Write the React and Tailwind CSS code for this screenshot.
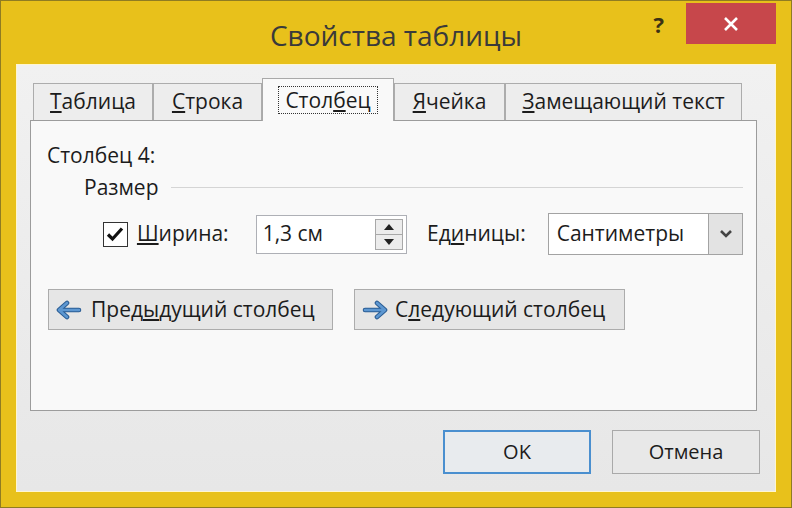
import React from 'react';

const font = { fontFamily: '"Open Sans", "Noto Sans", sans-serif' };

function Tab({ children, active, width }) {
  if (active) {
    return (
      <div className="relative z-10 -mb-px flex h-[43px] w-[132px] items-center justify-center border border-b-0 border-[#a9a9a9] bg-[#f9f9f9]">
        <span className="border border-dotted border-[#333] px-[6px] leading-[26px]">{children}</span>
      </div>
    );
  }
  return (
    <div className={'flex h-[37px] items-center justify-center border border-b-0 border-[#acacac] bg-[#ededed] ' + width}>
      {children}
    </div>
  );
}

function ArrowIcon({ dir }) {
  return (
    <svg width="28" height="20" viewBox="0 0 28 20">
      <g transform={dir === 'left' ? '' : 'translate(28 0) scale(-1 1)'}>
        <path d="M24 10H5M12 3L4 10l8 7" fill="none" stroke="#2a5c93" strokeWidth="4.6" strokeLinecap="round" strokeLinejoin="round" />
        <path d="M24 10H5M12 3L4 10l8 7" fill="none" stroke="#5d97d1" strokeWidth="2.6" strokeLinecap="round" strokeLinejoin="round" />
      </g>
    </svg>
  );
}

export default function App() {
  return (
    <div style={font} className="flex h-[508px] w-[792px] flex-col border border-[#8f7c22] bg-[#e8c11b] text-[#1c1c1c]">
      {/* title bar */}
      <div className="grid h-[63px] grid-cols-[1fr_auto_1fr]">
        <div />
        <div className="pt-[14px] text-[28px] leading-[40px] text-[#3a3a3a]">Свойства таблицы</div>
        <div className="flex items-start justify-end pr-[15px]">
          <div className="mt-[8px] mr-[22px] text-[22px] font-bold leading-[30px] text-[#3b3114]">?</div>
          <div className="mt-[2px] flex h-[41px] w-[90px] items-center justify-center bg-[#c7474b]">
            <svg width="16" height="16" viewBox="0 0 16 16">
              <path d="M2 2l12 12M14 2L2 14" stroke="#fff" strokeWidth="2.6" />
            </svg>
          </div>
        </div>
      </div>

      {/* client area */}
      <div className="mx-[15px] mb-[15px] flex flex-1 flex-col border border-[#fff6cf] bg-gradient-to-b from-[#f1f1f1] to-[#e7e7e7] px-[13px] pt-[13px]">
        <div className="flex items-end pl-[3px] text-[21px]">
          <Tab width="w-[120px]"><u>Т</u>аблица</Tab>
          <Tab width="w-[109px]"><u>С</u>трока</Tab>
          <Tab active>Стол<u>б</u>ец</Tab>
          <Tab width="w-[111px]"><u>Я</u>чейка</Tab>
          <Tab width="w-[237px]"><u>З</u>амещающий текст</Tab>
        </div>

        <div className="flex h-[291px] w-[727px] flex-col border border-[#9c9c9c] bg-[#f9f9f9] pl-[16px] pr-[13px] pt-[20px] text-[21px]">
          <div className="leading-[28px]">Столбец 4:</div>
          <div className="mt-[4px] flex items-center pl-[37px]">
            <span className="leading-[28px]">Размер</span>
            <div className="ml-[12px] h-px flex-1 bg-[#d5d5d5]" />
          </div>

          <div className="mt-[12px] flex items-center pl-[56px]">
            <div className="flex h-[25px] w-[25px] items-center justify-center border-[1.5px] border-[#333] bg-white">
              <svg width="18" height="16" viewBox="0 0 18 16">
                <path d="M2 8.5l4.5 4.5L16 2.5" fill="none" stroke="#111" strokeWidth="3.2" />
              </svg>
            </div>
            <span className="ml-[9px]"><u>Ш</u>ирина:</span>
            <div className="ml-[27px] flex h-[39px] w-[152px] border border-[#aeb0b6] bg-white">
              <div className="flex flex-1 items-center pl-[6px]">1,3 см</div>
              <div className="my-[3px] mr-[3px] flex w-[28px] flex-col border border-[#a8a8a8]">
                <div className="flex flex-1 items-center justify-center border-b border-[#a8a8a8] bg-[#ececec]">
                  <svg width="10" height="6" viewBox="0 0 10 6"><path d="M0 6L5 0l5 6z" fill="#222" /></svg>
                </div>
                <div className="flex flex-1 items-center justify-center bg-[#ececec]">
                  <svg width="10" height="6" viewBox="0 0 10 6"><path d="M0 0l5 6 5-6z" fill="#222" /></svg>
                </div>
              </div>
            </div>
            <span className="ml-[20px]">Ед<u>и</u>ницы:</span>
            <div className="ml-[22px] flex h-[42px] w-[196px] border border-[#a3a3a3] bg-white">
              <div className="flex flex-1 items-center pl-[8px]">Сантиметры</div>
              <div className="flex w-[34px] items-center justify-center border-l border-[#a3a3a3] bg-[#e3e3e3]">
                <svg width="14" height="10" viewBox="0 0 14 10"><path d="M2 2l5 5 5-5" fill="none" stroke="#444" strokeWidth="2.6" /></svg>
              </div>
            </div>
          </div>

          <div className="mt-[34px] flex gap-[21px] pl-[1px]">
            <button className="flex h-[41px] w-[285px] items-center gap-[8px] border border-[#acacac] bg-[#e6e6e6] pl-[6px]">
              <ArrowIcon dir="left" />
              <span>Пред<u>ы</u>дущий столбец</span>
            </button>
            <button className="flex h-[41px] w-[271px] items-center gap-[6px] border border-[#acacac] bg-[#e6e6e6] pl-[6px]">
              <ArrowIcon dir="right" />
              <span>С<u>л</u>едующий столбец</span>
            </button>
          </div>
        </div>

        <div className="mt-[19px] flex justify-end gap-[21px] pr-[2px] text-[20px]">
          <button className="flex h-[44px] w-[148px] items-center justify-center border-2 border-[#4a8fcf] bg-[#e8ebee]">OK</button>
          <button className="flex h-[44px] w-[148px] items-center justify-center border border-[#a9a9a9] bg-[#e8e8e8]">Отмена</button>
        </div>
      </div>
    </div>
  );
}
